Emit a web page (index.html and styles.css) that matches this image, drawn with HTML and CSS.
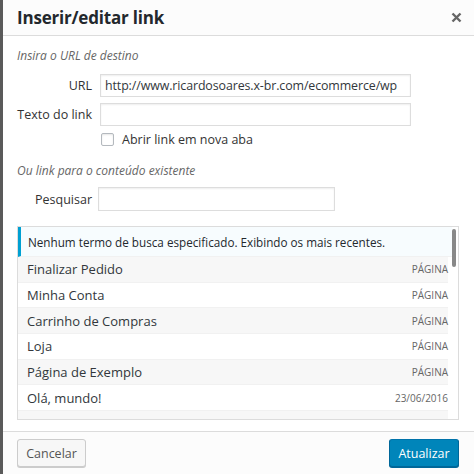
FILE: index.html
```html
<!DOCTYPE html>
<html lang="pt-BR">
<head>
<meta charset="utf-8">
<link rel="stylesheet" href="styles.css">
</head>
<body>
<div class="backdrop"></div>
<div class="dialog">
  <div class="header">
    <h1 class="title">Inserir/editar link</h1>
    <button class="close" aria-label="Fechar">
      <svg width="11" height="11" viewBox="0 0 11 11"><path d="M1.5 1.5 L9.5 9.5 M9.5 1.5 L1.5 9.5" stroke="#666" stroke-width="2.4" stroke-linecap="butt"/></svg>
    </button>
  </div>
  <div class="body">
    <p class="hint first">Insira o URL de destino</p>
    <div class="field">
      <label class="label">URL</label>
      <div class="input url">http://www.ricardosoares.x-br.com/ecommerce/wp</div>
    </div>
    <div class="field">
      <label class="label">Texto do link</label>
      <div class="input"></div>
    </div>
    <div class="check-row">
      <span class="checkbox"></span>
      <span class="check-label">Abrir link em nova aba</span>
    </div>
    <p class="hint second">Ou link para o conteúdo existente</p>
    <div class="field search">
      <label class="label">Pesquisar</label>
      <div class="input short"></div>
    </div>
    <div class="results">
      <div class="notice">Nenhum termo de busca especificado. Exibindo os mais recentes.</div>
      <ul class="list">
        <li class="item alt"><span>Finalizar Pedido</span><span class="type">PÁGINA</span></li>
        <li class="item"><span>Minha Conta</span><span class="type">PÁGINA</span></li>
        <li class="item alt"><span>Carrinho de Compras</span><span class="type">PÁGINA</span></li>
        <li class="item"><span>Loja</span><span class="type">PÁGINA</span></li>
        <li class="item alt"><span>Página de Exemplo</span><span class="type">PÁGINA</span></li>
        <li class="item"><span>Olá, mundo!</span><span class="type date">23/06/2016</span></li>
        <li class="item alt"></li>
      </ul>
      <div class="scrollbar"></div>
    </div>
  </div>
  <div class="footer">
    <button class="btn">Cancelar</button>
    <button class="btn primary">Atualizar</button>
  </div>
</div>
</body>
</html>
```
FILE: styles.css
```css
* { box-sizing: border-box; }
html, body { margin: 0; padding: 0; }
body {
  width: 474px;
  height: 474px;
  display: flex;
  background: #fff;
  font-family: "Open Sans", "DejaVu Sans", sans-serif;
  color: #333;
  overflow: hidden;
}
.backdrop {
  width: 3px;
  flex: none;
  background: #5a5a5a;
}
.dialog {
  flex: 1;
  display: flex;
  flex-direction: column;
  background: #fff;
}
.header {
  height: 36px;
  flex: none;
  display: flex;
  align-items: center;
  justify-content: space-between;
  padding: 0 10px 0 14px;
  background: #fcfcfc;
  border-bottom: 1px solid #dcdcdc;
}
.title {
  margin: 0;
  font-size: 17px;
  font-weight: 700;
  color: #23282d;
  letter-spacing: -0.2px;
}
.close {
  border: 0;
  background: none;
  padding: 0;
  width: 16px;
  height: 16px;
  display: flex;
  align-items: center;
  justify-content: center;
}
.body {
  flex: 1;
  padding: 0 15px 0 14px;
  display: flex;
  flex-direction: column;
}
.hint {
  margin: 0;
  font-size: 12px;
  font-style: italic;
  color: #666;
  line-height: 16px;
}
.hint.first { margin-top: 12px; }
.hint.second { margin-top: 17px; }
.field {
  display: flex;
  align-items: center;
  margin-top: 6px;
}
.hint.first + .field { margin-top: 10px; }
.label {
  width: 75px;
  flex: none;
  text-align: right;
  font-size: 12.5px;
  color: #333;
  margin-right: 8px;
}
.input {
  width: 311px;
  height: 23px;
  border: 1px solid #ddd;
  box-shadow: inset 0 1px 2px rgba(0,0,0,0.07);
  background: #fff;
  font-size: 13px;
  color: #32373c;
  line-height: 21px;
  padding: 0 5px;
  white-space: nowrap;
  overflow: hidden;
}
.input.url { font-size: 12.4px; letter-spacing: -0.1px; padding: 0 4px; }
.search { margin-top: 8px; }
.search .label { margin-right: 6px; }
.input.short { width: 237px; height: 24px; }
.check-row {
  display: flex;
  align-items: center;
  margin-top: 6px;
  padding-left: 84px;
  height: 14px;
}
.checkbox {
  width: 13px;
  height: 13px;
  border: 1px solid #b4b9be;
  border-radius: 2px;
  background: #fff;
  box-shadow: inset 0 1px 2px rgba(0,0,0,0.1);
  margin-right: 8px;
}
.check-label {
  font-size: 12.5px;
  color: #333;
}
.results {
  position: relative;
  margin-top: 15px;
  height: 194px;
  border: 1px solid #dcdcdc;
  overflow: hidden;
}
.notice {
  height: 30px;
  display: flex;
  align-items: center;
  padding-left: 7px;
  border-left: 3px solid #00a0d2;
  background: #f7fcfe;
  border-bottom: 1px solid #f1f1f1;
  font-size: 11.7px;
  color: #23282d;
  margin-right: 6px;
}
.list {
  list-style: none;
  margin: 0;
  padding: 0;
  margin-right: 10px;
}
.item {
  height: 25.7px;
  display: flex;
  align-items: center;
  justify-content: space-between;
  padding: 0 0 0 9px;
  font-size: 13px;
  color: #32373c;
  border-bottom: 1px solid #f1f1f1;
  background: #fff;
}
.item.alt { background: #f7f7f7; }
.type {
  font-size: 10px;
  color: #666;
}
.scrollbar {
  position: absolute;
  right: 2px;
  top: 2px;
  width: 4px;
  height: 38px;
  background: #888;
  border-radius: 2px;
}
.footer {
  height: 43px;
  flex: none;
  display: flex;
  align-items: center;
  justify-content: space-between;
  padding: 0 15px 0 14px;
  background: #fcfcfc;
  border-top: 1px solid #dcdcdc;
}
.btn {
  height: 28px;
  width: 69px;
  padding: 0;
  font-family: inherit;
  font-size: 12.5px;
  color: #555;
  background: #f7f7f7;
  border: 1px solid #ccc;
  border-radius: 3px;
  box-shadow: 0 1px 0 #ccc;
}
.btn.primary {
  width: 70px;
  color: #fff;
  background: #0085ba;
  border-color: #0073aa #006799 #006799;
  box-shadow: 0 1px 0 #006799;
}
```
